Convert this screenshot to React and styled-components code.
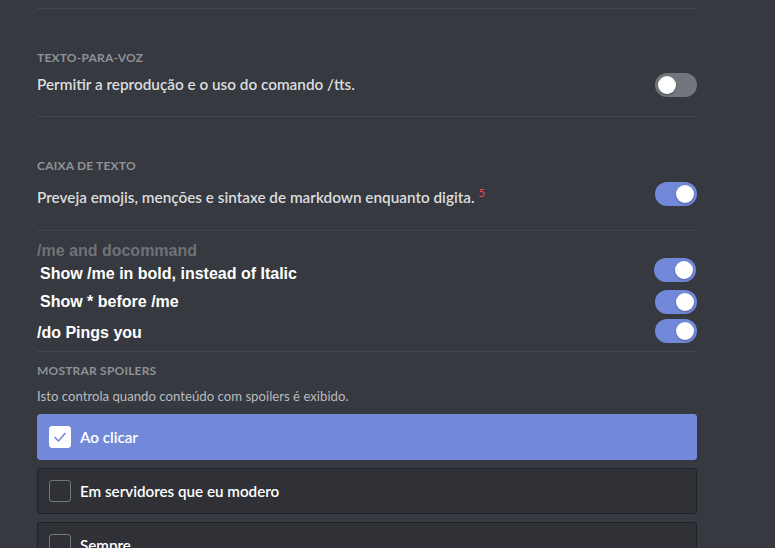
import styled, { createGlobalStyle } from "styled-components"

const GlobalStyle = createGlobalStyle`
  html, body {
    margin: 0;
    padding: 0;
    background: #36393f;
  }
  body {
    font-family: Lato, "Noto Sans", sans-serif;
  }
`

const Page = styled.div`
  width: 775px;
  height: 548px;
  overflow: hidden;
  background: #36393f;
  padding: 8px 0 0 37px;
  box-sizing: border-box;
`

const Column = styled.div`
  width: 660px;
  display: flex;
  flex-direction: column;
`

const Divider = styled.div`
  height: 1px;
  background: #43464c;
  margin-top: ${(p) => p.$top || 0}px;
`

const Section = styled.section`
  display: flex;
  flex-direction: column;
  padding-top: ${(p) => p.$top || 0}px;
`

const SectionTitle = styled.h5`
  margin: 0;
  font-size: 12px;
  line-height: 16px;
  font-weight: 700;
  letter-spacing: 0.2px;
  color: #8e9297;
  text-transform: uppercase;
  padding-top: 1px;
`

const Row = styled.div`
  display: flex;
  align-items: center;
  justify-content: space-between;
  height: 24px;
  margin-top: ${(p) => p.$top || 0}px;
`

const Label = styled.span`
  font-size: 15.3px;
  font-weight: 600;
  color: #dcddde;
  display: flex;
  align-items: flex-start;
  padding-top: ${(p) => p.$drop || 0}px;
  padding-bottom: ${(p) => p.$lift || 0}px;
`

const Sup = styled.sup`
  font-size: 11px;
  font-weight: 400;
  color: #f04747;
  margin-left: 4px;
  position: relative;
  top: -2px;
`

const Toggle = styled.div`
  width: 42px;
  height: 24px;
  border-radius: 14px;
  background: ${(p) => (p.$on ? "#7289da" : "#72767d")};
  display: flex;
  align-items: center;
  justify-content: ${(p) => (p.$on ? "flex-end" : "flex-start")};
  padding: 0 3px;
  box-sizing: border-box;
  flex-shrink: 0;
  margin-right: ${(p) => p.$shift || 0}px;

  &::after {
    content: "";
    width: 18px;
    height: 18px;
    border-radius: 50%;
    background: #fff;
    box-shadow: 0 1px 2px rgba(0, 0, 0, 0.3);
  }
`

const CustomTitle = styled.div`
  font-family: "Liberation Sans", Arial, sans-serif;
  font-size: 16px;
  font-weight: 700;
  color: #6f7277;
  line-height: 20px;
  margin-top: 10px;
`

const CustomLabel = styled.span`
  font-family: "Liberation Sans", Arial, sans-serif;
  font-size: 16px;
  font-weight: 700;
  color: #ffffff;
  padding-left: ${(p) => p.$indent || 0}px;
  padding-top: ${(p) => p.$drop || 0}px;
`

const Note = styled.div`
  font-size: 13.2px;
  color: #b9bbbe;
  margin-top: 8px;
  line-height: 18px;
`

const Options = styled.div`
  display: flex;
  flex-direction: column;
  gap: 8px;
  margin-top: 9px;
`

const Option = styled.div`
  height: 46px;
  box-sizing: border-box;
  border-radius: 3px;
  display: flex;
  align-items: center;
  gap: 9px;
  padding: 0 11px;
  background: ${(p) => (p.$selected ? "#7289da" : "#2f3136")};
  border: 1px solid ${(p) => (p.$selected ? "#7289da" : "#202225")};
`

const Box = styled.div`
  width: 22px;
  height: 22px;
  box-sizing: border-box;
  border-radius: 3px;
  display: flex;
  align-items: center;
  justify-content: center;
  background: ${(p) => (p.$checked ? "#fff" : "transparent")};
  border: 1px solid ${(p) => (p.$checked ? "#fff" : "#72767d")};
`

const OptionText = styled.span`
  font-size: 15.2px;
  font-weight: 600;
  color: #fff;
`

function Check() {
  return (
    <svg width="14" height="14" viewBox="0 0 14 14">
      <path d="M2 7.5 L5.5 11 L12 3.5" fill="none" stroke="#7289da" strokeWidth="1.6" strokeLinecap="round" strokeLinejoin="round" />
    </svg>
  )
}

const spoilerOptions = [
  { label: "Ao clicar", selected: true },
  { label: "Em servidores que eu modero" },
  { label: "Sempre" },
]

export default function App() {
  return (
    <Page>
      <GlobalStyle />
      <Column>
        <Divider />

        <Section $top={40}>
          <SectionTitle>Texto-para-voz</SectionTitle>
          <Row $top={7}>
            <Label $lift={3}>Permitir a reprodução e o uso do comando /tts.</Label>
            <Toggle />
          </Row>
        </Section>
        <Divider $top={19} />

        <Section $top={40}>
          <SectionTitle>Caixa de texto</SectionTitle>
          <Row $top={8}>
            <Label $drop={6}>
              Preveja emojis, menções e sintaxe de markdown enquanto digita.
              <Sup>5</Sup>
            </Label>
            <Toggle $on />
          </Row>
        </Section>
        <Divider $top={24} />

        <Section>
          <CustomTitle>/me and docommand</CustomTitle>
          <Row $top={-3}>
            <CustomLabel $indent={3} $drop={8}>Show /me in bold, instead of Italic</CustomLabel>
            <Toggle $on $shift={1} />
          </Row>
          <Row $top={8}>
            <CustomLabel $indent={3}>Show * before /me</CustomLabel>
            <Toggle $on />
          </Row>
          <Row $top={5}>
            <CustomLabel $drop={3}>/do Pings you</CustomLabel>
            <Toggle $on />
          </Row>
        </Section>
        <Divider $top={8} />

        <Section $top={10}>
          <SectionTitle>Mostrar spoilers</SectionTitle>
          <Note>Isto controla quando conteúdo com spoilers é exibido.</Note>
          <Options>
            {spoilerOptions.map((o) => (
              <Option key={o.label} $selected={o.selected}>
                <Box $checked={o.selected}>{o.selected && <Check />}</Box>
                <OptionText>{o.label}</OptionText>
              </Option>
            ))}
          </Options>
        </Section>
      </Column>
    </Page>
  )
}
